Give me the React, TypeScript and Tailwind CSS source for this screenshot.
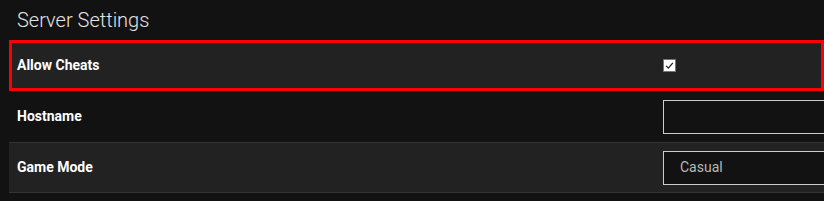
import React from "react";

function Row({
  label,
  highlighted = false,
  striped = false,
  children,
}: {
  label: string;
  highlighted?: boolean;
  striped?: boolean;
  children: React.ReactNode;
}) {
  const look = highlighted
    ? "h-[51px] w-[815px] border-[3px] border-[#ff0000] bg-[#222222]"
    : striped
      ? "h-[51px] w-[815px] border-y border-[#333333] bg-[#222222] pl-[3px]"
      : "h-[51px] w-[815px] pl-[3px]";
  return (
    <div className={`flex items-center ${look}`}>
      <div className="w-[651px] shrink-0 pl-[5px] text-[14px] font-bold text-white">{label}</div>
      <div className="flex-1">{children}</div>
    </div>
  );
}

export default function App() {
  return (
    <div
      className="h-[201px] w-[824px] overflow-hidden bg-[#121212] pl-[9px]"
      style={{ fontFamily: "Roboto, 'Liberation Sans', sans-serif" }}
    >
      <h1 className="pl-[8px] pt-[7px] pb-[6px] text-[20px] leading-[27px] font-light text-[#e4e4e4]">
        Server Settings
      </h1>
      <Row label="Allow Cheats" highlighted>
        <span className="flex h-[13px] w-[13px] items-center justify-center border border-[#767676] bg-white">
          <svg viewBox="0 0 12 12" className="h-[9px] w-[9px]" fill="none" stroke="#222" strokeWidth={1.8}>
            <path d="M1.5 6.5 L4.5 9.5 L10.5 2.5" />
          </svg>
        </span>
      </Row>
      <Row label="Hostname">
        <div className="h-[34px] w-[200px] border border-[#cccccc] bg-[#121212]" />
      </Row>
      <Row label="Game Mode" striped>
        <div className="flex h-[34px] w-[200px] items-center border border-[#cccccc] bg-[#121212] pl-[16px] text-[14px] text-[#b8b8b8]">
          Casual
        </div>
      </Row>
    </div>
  );
}
